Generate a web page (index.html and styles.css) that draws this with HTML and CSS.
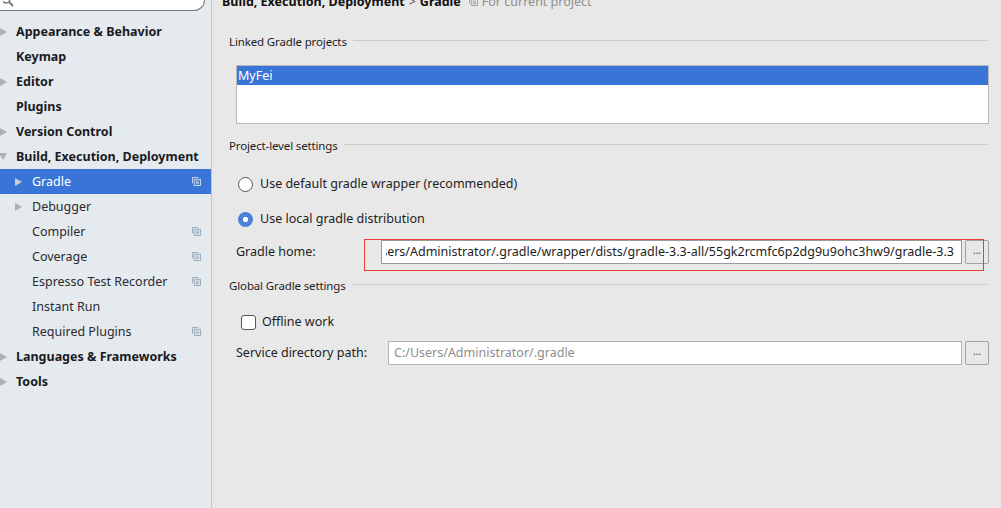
FILE: index.html
```html
<!DOCTYPE html>
<html lang="en">
<head>
<meta charset="utf-8">
<title>Settings - Gradle</title>
<link rel="stylesheet" href="styles.css">
</head>
<body>
<svg class="defs" width="0" height="0" aria-hidden="true">
  <symbol id="copy" viewBox="0 0 10 10">
    <path d="M.5 7V.5H7" fill="none" stroke="currentColor"/>
    <path d="M2.5 2.5h7v7h-7z" fill="none" stroke="currentColor"/>
    <path d="M4 4.5h4M4 6h4M4 7.5h4" stroke="currentColor" stroke-width=".8"/>
  </symbol>
</svg>
<div class="app">
  <aside class="sidebar">
    <div class="search">
      <svg class="search-icon" width="12" height="10" viewBox="0 0 12 10"><circle cx="3" cy="-1" r="4" fill="none" stroke="#777" stroke-width="1.5"/><path d="M6 2l4 4" stroke="#777" stroke-width="2"/></svg>
    </div>
    <ul class="tree">
      <li class="item top"><i class="tri right"></i>Appearance &amp; Behavior</li>
      <li class="item top">Keymap</li>
      <li class="item top"><i class="tri right"></i>Editor</li>
      <li class="item top">Plugins</li>
      <li class="item top"><i class="tri right"></i>Version Control</li>
      <li class="item top"><i class="tri down"></i>Build, Execution, Deployment</li>
      <li class="item child selected"><i class="tri right"></i>Gradle<svg class="copy"><use href="#copy"/></svg></li>
      <li class="item child"><i class="tri right"></i>Debugger</li>
      <li class="item child">Compiler<svg class="copy"><use href="#copy"/></svg></li>
      <li class="item child">Coverage<svg class="copy"><use href="#copy"/></svg></li>
      <li class="item child">Espresso Test Recorder<svg class="copy"><use href="#copy"/></svg></li>
      <li class="item child">Instant Run</li>
      <li class="item child">Required Plugins<svg class="copy"><use href="#copy"/></svg></li>
      <li class="item top"><i class="tri right"></i>Languages &amp; Frameworks</li>
      <li class="item top"><i class="tri right"></i>Tools</li>
    </ul>
  </aside>
  <main class="main">
    <header class="crumbs">
      <b>Build, Execution, Deployment</b><span class="sep">&gt;</span><b>Gradle</b>
      <svg class="copy crumb-copy"><use href="#copy"/></svg><span class="scope">For current project</span>
    </header>
    <div class="group first"><span>Linked Gradle projects</span><hr></div>
    <div class="list"><div class="list-row">MyFei</div></div>
    <div class="group second"><span>Project-level settings</span><hr></div>
    <label class="radio-row r1"><i class="radio"></i>Use default gradle wrapper (recommended)</label>
    <label class="radio-row r2"><i class="radio on"></i>Use local gradle distribution</label>
    <div class="field home">
      <span class="field-label">Gradle home:</span>
      <div class="input"><span class="clip"><span>C:/Users/Administrator/.gradle/wrapper/dists/gradle-3.3-all/55gk2rcmfc6p2dg9u9ohc3hw9/gradle-3.3</span></span></div>
      <div class="browse">...</div>
    </div>
    <div class="group third"><span>Global Gradle settings</span><hr></div>
    <label class="check-row"><i class="check"></i>Offline work</label>
    <div class="field service">
      <span class="field-label">Service directory path:</span>
      <div class="input muted"><span class="clip start"><span>C:/Users/Administrator/.gradle</span></span></div>
      <div class="browse">...</div>
    </div>
    <div class="red-box"></div>
  </main>
</div>
</body>
</html>
```
FILE: styles.css
```css
* { box-sizing: border-box; }
html, body { margin: 0; height: 100%; }
body {
  overflow: hidden;
  font-family: "Noto Sans", "Open Sans", sans-serif;
  font-size: 12.5px;
  color: #1d1d1d;
  background: #e8e8e8;
}
.defs { position: absolute; }
.app { display: flex; height: 508px; }

/* Sidebar */
.sidebar {
  flex: 0 0 212px;
  background: #e5eaef;
  border-right: 1px solid #c2c6ca;
  overflow: hidden;
}
.search {
  height: 11px;
  width: 217px;
  margin-left: -12px;
  background: #fff;
  border: 1px solid #777;
  border-top: 0;
  border-radius: 0 0 12px 12px;
  position: relative;
  overflow: hidden;
}
.search-icon { position: absolute; left: 14px; top: 0; }
.tree { list-style: none; margin: 8px 0 0; padding: 0; }
.item {
  height: 25px;
  display: flex;
  align-items: center;
  position: relative;
  white-space: nowrap;
}
.top { padding-left: 16px; font-weight: 700; color: #1a1a22; }
.child { padding-left: 32px; color: #2a2a30; }
.selected { background: #3875d7; color: #fff; }
.tri { position: absolute; width: 0; height: 0; }
.tri.right {
  border-style: solid;
  border-width: 4.5px 0 4.5px 7px;
  border-color: transparent transparent transparent #aeb0b2;
}
.top .tri.right { left: 0; }
.top .tri.down {
  left: -1px;
  border-style: solid;
  border-width: 7px 4.5px 0;
  border-color: #aeb0b2 transparent transparent;
}
.child .tri.right { left: 15px; }
.selected .tri.right { border-left-color: #c8d0dc; }
.copy {
  position: absolute;
  left: 192px;
  top: 8px;
  width: 9px;
  height: 9px;
  color: #8fa3b2;
}
.selected .copy { color: #d9e4f5; }

/* Main */
.main { flex: 1; position: relative; min-width: 0; padding-left: 10px; }
.crumbs {
  height: 10px;
  display: flex;
  align-items: center;
  gap: 4px;
  color: #111;
  margin-top: -4px;
  white-space: nowrap;
}
.crumbs b { font-weight: 700; }
.sep { color: #555; }
.crumb-copy { position: static; width: 9px; height: 9px; color: #9a9a9a; margin-left: 4px; }
.scope { color: #8f8f8f; }
.group {
  display: flex;
  align-items: center;
  gap: 6px;
  height: 18px;
  padding-left: 7px;
  margin-right: 14px;
  font-size: 11.5px;
  letter-spacing: -.14px;
}
.group hr { flex: 1; margin: 0 0 1px; border: 0; border-top: 1px solid #cbcbcb; }
.group.first { margin-top: 26px; }
.group.second { margin-top: 12px; }
.group.third { margin-top: 12px; }
.list {
  height: 59px;
  margin: 15px 12px 0 14px;
  background: #fff;
  border: 1px solid #b9b9b9;
}
.list-row {
  height: 19px;
  line-height: 19px;
  padding-left: 1px;
  background: #3875d7;
  color: #fff;
}
.radio-row {
  display: flex;
  align-items: center;
  gap: 7px;
  height: 20px;
  padding-left: 16px;
  padding-bottom: 2px;
}
.r1 { margin-top: 20px; }
.r2 { margin-top: 15px; }
.radio {
  width: 15px;
  height: 15px;
  margin-top: 2px;
  border-radius: 50%;
  background: #fff;
  border: 1px solid #555;
  flex: none;
}
.radio.on {
  border: 0;
  background: radial-gradient(circle, #fff 0 2.4px, #4a80d8 3px);
}
.field { display: flex; align-items: center; margin-right: 12px; padding-left: 14px; height: 24px; }
.home { margin-top: 11px; }
.service { margin-top: 9px; }
.field-label { flex: none; white-space: nowrap; padding-bottom: 2px; }
.home .field-label { width: 145px; }
.service .field-label { width: 152px; }
.input {
  flex: 1;
  min-width: 0;
  height: 24px;
  background: #fff;
  border: 1px solid #9c9c9c;
  padding: 0 7px 2px 4px;
  display: flex;
  align-items: center;
}
.muted { color: #8c8c8c; border-color: #b3b3b3; padding-left: 5px; }
.clip { display: flex; justify-content: flex-end; width: 100%; overflow: hidden; white-space: nowrap; }
.clip.start { justify-content: flex-start; }
.clip > span { flex: none; }
.browse {
  flex: none;
  width: 24px;
  height: 24px;
  margin-left: 3px;
  border: 1px solid #a3a3a3;
  border-radius: 2px;
  background: #e8e8e8;
  text-align: center;
  line-height: 19px;
  font-size: 10px;
  color: #444;
}
.check-row {
  display: flex;
  align-items: center;
  gap: 6px;
  height: 20px;
  padding-left: 19px;
  padding-bottom: 2px;
  margin-top: 18px;
}
.check {
  width: 15px;
  height: 15px;
  margin-top: 2px;
  flex: none;
  background: #fff;
  border: 1px solid #555;
  border-radius: 3px;
}
.red-box {
  position: absolute;
  left: 152px;
  top: 239px;
  width: 620px;
  height: 32px;
  border: 1px solid #ee3b3b;
  pointer-events: none;
}
```
